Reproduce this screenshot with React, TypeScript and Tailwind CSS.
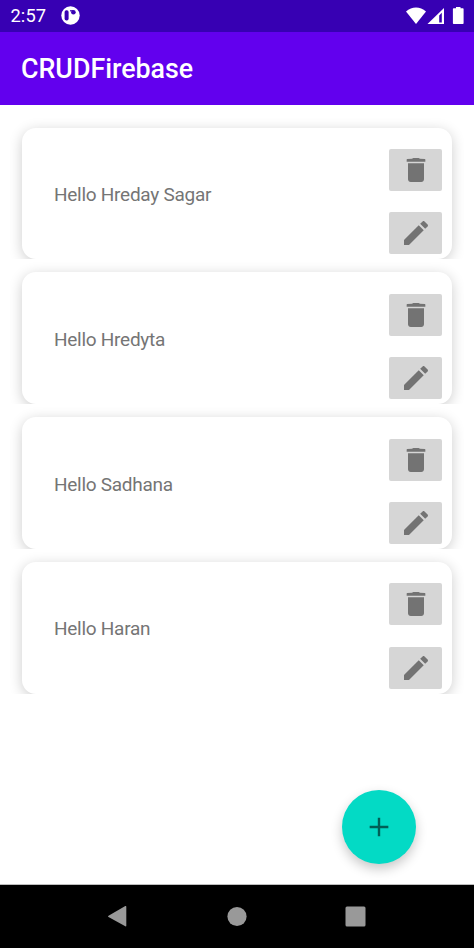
import React from 'react'

const notes = ['Hello Hreday Sagar', 'Hello Hredyta', 'Hello Sadhana', 'Hello Haran']

const StatusBar = () => (
  <div className="flex h-[31.5px] items-center justify-between bg-[#3700b3] pl-[10.5px] pr-[9px] text-white">
    <div className="flex items-center gap-[15px]">
      <span className="text-[18.3px] leading-none tracking-[0.1px]">2:57</span>
      <svg width="19" height="19" viewBox="0 0 19 19">
        <circle cx="9.5" cy="9.5" r="9.2" fill="#fff" />
        <rect x="3.6" y="4.2" width="4" height="10.4" rx="1.8" fill="#3700b3" />
        <path d="M9 4.200h3v1.200H9z" fill="#3700b3" />
        <circle cx="12.4" cy="6.2" r="2.3" fill="#3700b3" />
      </svg>
    </div>
    <svg width="60" height="20" viewBox="0 0 60 20" fill="#fff">
      <path d="M1 5.500C7 .3 15 .3 21 5.500L11 18z" />
      <path fillRule="evenodd" d="M39 2v16H22.500L39 2zm-2.200 4.800-2.600 2.700V16.500h2.600z" />
      <path d="M51 2.300V1h4.500v1.300h2.300a.8.8 0 0 1 .8.8v14.100a.8.8 0 0 1-.8.8h-9.100a.8.8 0 0 1-.8-.8V3.100a.8.8 0 0 1 .8-.8z" />
    </svg>
  </div>
)

const IconButton = ({ path }: { path: string }) => (
  <button className="flex h-[42px] w-[53px] items-center justify-center rounded-[2px] bg-[#d6d6d6]">
    <svg width="32" height="32" viewBox="0 0 24 24" fill="#737373">
      <path d={path} />
    </svg>
  </button>
)

const trashPath = "M6 19c0 1.100.9 2 2 2h8c1.100 0 2-.9 2-2V7H6v12zM19 4.200q0-.4-.4-.4l-3.600-.2-1-.6h-4l-1 .6-3.600.2q-.4 0-.4.4V5.800h14z"
const pencilPath = "M3 17.250V21h3.750L17.810 9.940l-3.750-3.750L3 17.250zM20.710 7.040c.39-.39.39-1.020 0-1.410l-2.340-2.340c-.39-.39-1.020-.39-1.410 0l-1.830 1.830 3.750 3.750 1.830-1.830z"

const NoteCard = ({ text }: { text: string }) => (
  <div className="h-[144.8px] overflow-hidden px-3 pt-[13px]">
    <div className="flex h-full items-start justify-between rounded-[14px] bg-white pl-8 pr-[10px] pt-[21.5px] shadow-[0_3px_14px_rgba(0,0,0,0.2)]">
      <p className="pt-[33px] text-[19px] leading-[26px] tracking-[-0.27px] text-[#757575]">{text}</p>
      <div className="flex flex-col gap-[21.2px]">
        <IconButton path={trashPath} />
        <IconButton path={pencilPath} />
      </div>
    </div>
  </div>
)

const NavBar = () => (
  <div className="flex h-16 items-center justify-center border-t border-[#bdbdbd] bg-black">
    <svg width="260" height="24" viewBox="0 0 260 24" fill="#999">
      <path d="M1.5 10.700 18.300 1.100q1-.5 1 .6v19q0 1.100-1 .6L1.500 12.100q-1-.7 0-1.400z" />
      <circle cx="130" cy="11.5" r="9.6" />
      <rect x="238.5" y="1.5" width="20" height="20" rx="1.5" />
    </svg>
  </div>
)

const App = () => {
  return (
    <div className="flex h-[948px] w-[474px] flex-col bg-white font-[Roboto,sans-serif]">
      <StatusBar />
      <header className="flex h-[73.5px] items-center bg-[#6200ee] pl-[21px] pt-[2px]">
        <h1 className="text-[26.8px] font-medium leading-none text-white">CRUDFirebase</h1>
      </header>
      <main className="relative flex-1 px-[10px] pt-[9.5px]">
        {notes.map((note) => (
          <NoteCard key={note} text={note} />
        ))}
        <button className="absolute right-[58px] bottom-[20px] flex size-[74px] items-center justify-center rounded-full bg-[#03dac5] shadow-[0_5px_12px_rgba(0,0,0,0.22)]">
          <svg width="32" height="32" viewBox="0 0 24 24" fill="#015f56">
            <path d="M19 12.900h-6.100V19h-1.800v-6.100H5v-1.800h6.100V5h1.800v6.100H19z" />
          </svg>
        </button>
      </main>
      <NavBar />
    </div>
  )
}

export default App
